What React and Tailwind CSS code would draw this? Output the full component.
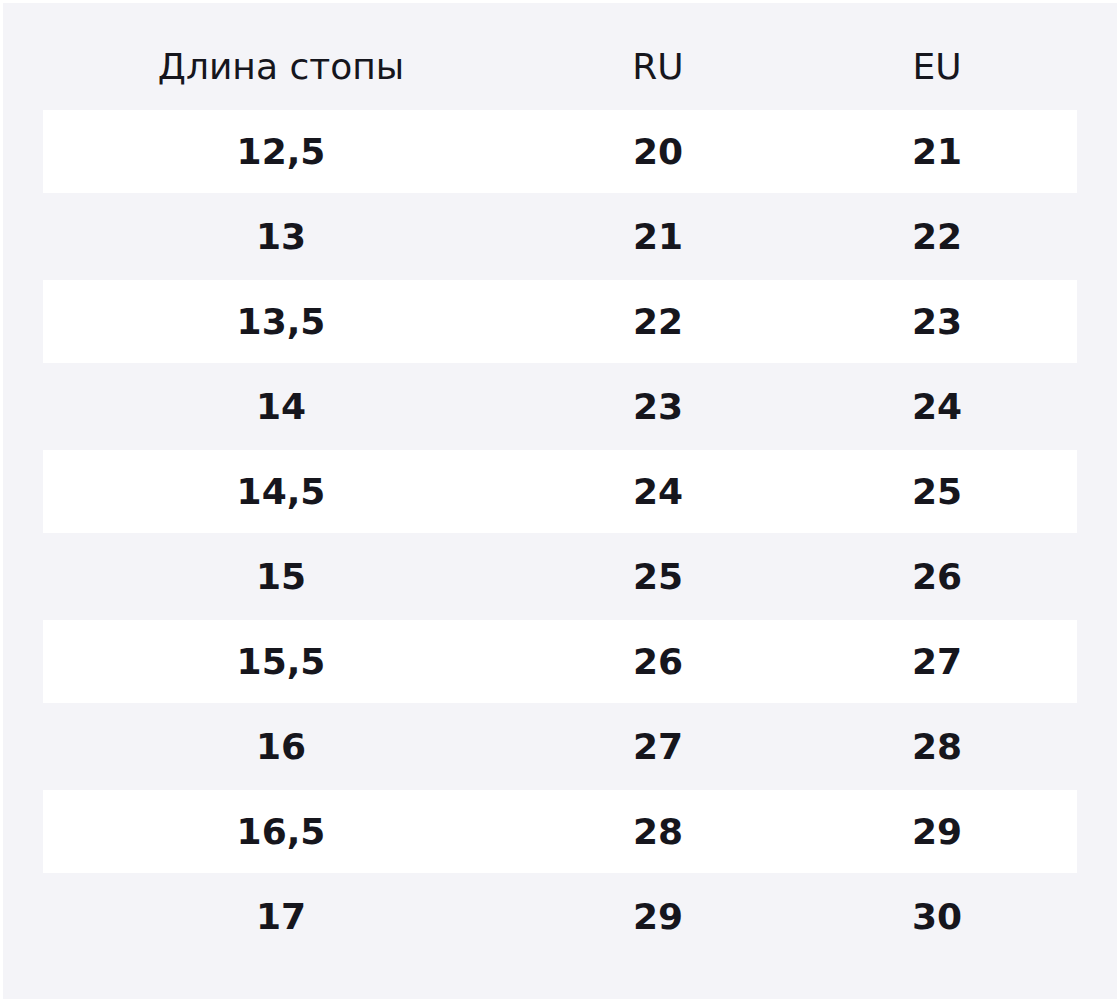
import React from 'react';

const rows = [
  ['12,5', '20', '21'],
  ['13', '21', '22'],
  ['13,5', '22', '23'],
  ['14', '23', '24'],
  ['14,5', '24', '25'],
  ['15', '25', '26'],
  ['15,5', '26', '27'],
  ['16', '27', '28'],
  ['16,5', '28', '29'],
  ['17', '29', '30'],
];

function App() {
  return (
    <div className="bg-white p-[3px] pb-[4px] w-[1120px] h-[1003px]">
      <div
        className="bg-[#f4f4f8] h-full px-[40px] pt-[20px] text-[#16161d] text-[36px]"
        style={{ fontFamily: '"DejaVu Sans", sans-serif' }}
      >
        {/* Header */}
        <div className="grid grid-cols-[476px_278px_280px] h-[87px] items-center text-center">
          <div>Длина стопы</div>
          <div>RU</div>
          <div>EU</div>
        </div>

        {rows.map((row, i) => (
          <div
            key={i}
            className={
              i % 2 === 0
                ? 'grid grid-cols-[476px_278px_280px] h-[83px] items-center text-center font-bold bg-white'
                : 'grid grid-cols-[476px_278px_280px] h-[87px] items-center text-center font-bold'
            }
          >
            {row.map((cell, j) => (
              <div key={j}>{cell}</div>
            ))}
          </div>
        ))}
      </div>
    </div>
  );
}

export default App;
